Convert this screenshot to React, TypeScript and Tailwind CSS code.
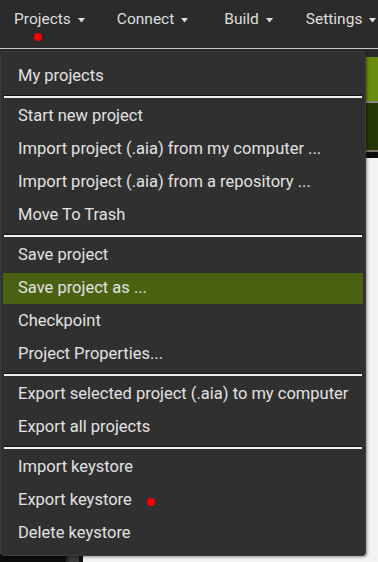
import React from "react";

const Caret = () => (
  <svg width="7" height="5" viewBox="0 0 7 5" className="ml-[7px] mt-[1px]">
    <path d="M0 0 L7 0 L3.5 4.5 Z" fill="#dcdcdc" />
  </svg>
);

type Entry = { t: "item"; label: string; hl?: boolean; dot?: boolean } | { t: "sep" };

const entries: Entry[] = [
  { t: "item", label: "My projects" },
  { t: "sep" },
  { t: "item", label: "Start new project" },
  { t: "item", label: "Import project (.aia) from my computer ..." },
  { t: "item", label: "Import project (.aia) from a repository ..." },
  { t: "item", label: "Move To Trash" },
  { t: "sep" },
  { t: "item", label: "Save project" },
  { t: "item", label: "Save project as ...", hl: true },
  { t: "item", label: "Checkpoint" },
  { t: "item", label: "Project Properties..." },
  { t: "sep" },
  { t: "item", label: "Export selected project (.aia) to my computer" },
  { t: "item", label: "Export all projects" },
  { t: "sep" },
  { t: "item", label: "Import keystore" },
  { t: "item", label: "Export keystore", dot: true },
  { t: "item", label: "Delete keystore" },
];

export default function App() {
  return (
    <div
      className="relative h-[562px] w-[378px] overflow-hidden bg-[#f3f3f3]"
      style={{ fontFamily: "Roboto, 'Noto Sans', sans-serif" }}
    >
      {/* nav bar */}
      <div className="flex h-[48px] items-center bg-[#2b2b2b] pb-[8px] text-[15.5px] text-[#dedede]">
        <div className="relative ml-[14px] flex items-center">
          <span>Projects</span>
          <Caret />
          <span className="absolute left-[20px] top-[25px] h-[8px] w-[8px] rounded-full bg-[#ff0000]" />
        </div>
        <div className="ml-[32px] flex items-center">
          <span>Connect</span>
          <Caret />
        </div>
        <div className="ml-[36px] flex items-center">
          <span>Build</span>
          <Caret />
        </div>
        <div className="ml-[33px] flex items-center">
          <span>Settings</span>
          <Caret />
        </div>
      </div>
      <div className="h-[1px] bg-[#c8c8c8]" />
      {/* background content */}
      <div className="h-[8px] bg-[#2b2b2b]" />
      <div className="h-[44px] bg-[#6a8c0e]" />
      <div className="h-[2px] bg-[#8a8a7a]" />
      <div className="h-[47px] bg-[#273608]" />
      <div className="h-[2px] bg-[#7a7a6a]" />
      <div className="h-[6px] bg-[#0d0d0d]" />
      <div className="flex h-[404px]">
        <div className="w-[66px] bg-[#0d0d0d]" />
        <div className="w-[3px] bg-[#2a2a2a]" />
        <div className="w-[10px] bg-[#3a3a3a]" />
        <div className="w-[4px] bg-[#111]" />
        <div className="flex-1 bg-[#f3f3f3]" />
      </div>

      {/* dropdown menu */}
      <div className="absolute left-0 top-[51px] w-[366px] rounded-[4px] border border-[#3c3c3c] bg-[#303030] pb-[5px] pt-[8px] text-[16.5px] text-[#e2e2e2] shadow-[1px_1px_3px_rgba(0,0,0,0.45)]">
        {entries.map((e, i) =>
          e.t === "sep" ? (
            <div key={i} className="flex h-[7px] flex-col justify-center px-[3px]">
              <div className="h-[1px] bg-[#151515]" />
              <div className="h-[2px] bg-[#f0f0f0]" />
            </div>
          ) : (
            <div key={i} className="flex h-[33px] items-center px-[2px]">
              <div
                className={
                  "flex h-[31px] flex-1 items-center pl-[15px] " + (e.hl ? "bg-[#4b6112]" : "")
                }
              >
                <span>{e.label}</span>
                {e.dot && <span className="ml-[15px] mt-[2px] h-[8px] w-[8px] rounded-full bg-[#ff0000]" />}
              </div>
            </div>
          )
        )}
      </div>
    </div>
  );
}
